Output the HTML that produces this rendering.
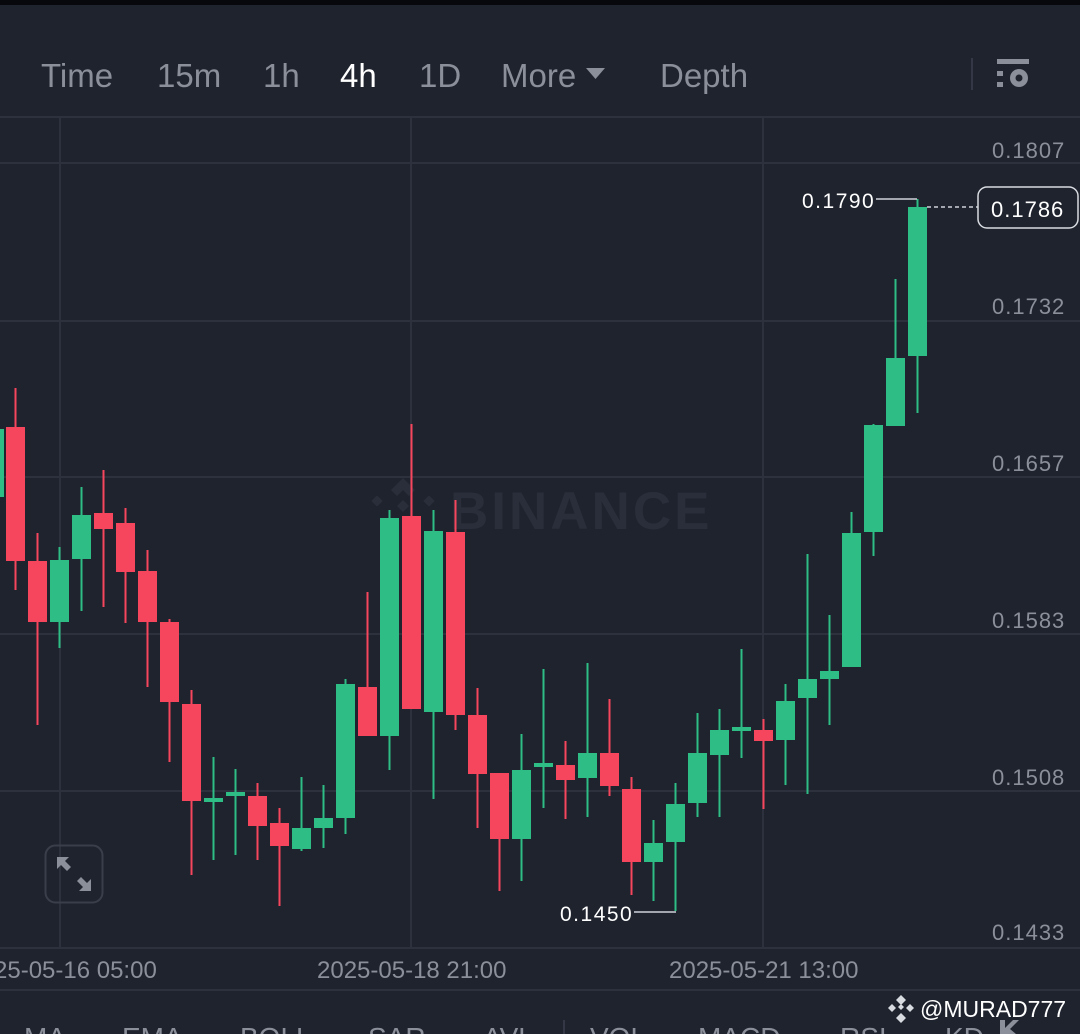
<!DOCTYPE html>
<html><head><meta charset="utf-8"><style>
html,body{margin:0;padding:0;background:#1f232e;width:1080px;height:1034px;overflow:hidden;font-family:"Liberation Sans",sans-serif}
</style></head><body>
<svg width="1080" height="1034" viewBox="0 0 1080 1034" xmlns="http://www.w3.org/2000/svg" style="position:absolute;left:0;top:0">
<rect x="0" y="0" width="1080" height="1034" fill="#1f232e"/>
<rect x="0" y="0" width="1080" height="5" fill="#06080c"/>
<g font-family="Liberation Sans, sans-serif" font-size="33" fill="#8b8f99">
<text x="41" y="87">Time</text>
<text x="157" y="87">15m</text>
<text x="263" y="87">1h</text>
<text x="340" y="87" fill="#ffffff">4h</text>
<text x="419" y="87">1D</text>
<text x="501" y="87">More</text>
<text x="660" y="87">Depth</text>
</g>
<path d="M586 68h19l-9.5 11z" fill="#8b8f99"/>
<rect x="971" y="58" width="2" height="32" fill="#343846"/>
<g fill="#8b8f99">
<rect x="997" y="59" width="32" height="5"/>
<rect x="997" y="71" width="6" height="5"/><rect x="997" y="82" width="6" height="5"/>
<circle cx="1019" cy="78" r="9"/>
</g>
<circle cx="1019" cy="78" r="3.5" fill="#1f232e"/>
<!-- grid -->
<g stroke="#2d313d" stroke-width="2">
<line x1="0" y1="117" x2="1080" y2="117"/>
<line x1="0" y1="163" x2="1080" y2="163"/>
<line x1="0" y1="321" x2="1080" y2="321"/>
<line x1="0" y1="477" x2="1080" y2="477"/>
<line x1="0" y1="634" x2="1080" y2="634"/>
<line x1="0" y1="791" x2="1080" y2="791"/>
<line x1="0" y1="948" x2="1080" y2="948"/>
<line x1="0" y1="990" x2="1080" y2="990"/>
<line x1="60" y1="117" x2="60" y2="948"/>
<line x1="411" y1="117" x2="411" y2="948"/>
<line x1="763" y1="117" x2="763" y2="948"/>
</g>
<g font-size="22" fill="#8b8f99" font-family="Liberation Sans, sans-serif" letter-spacing="1">
<text x="992" y="158">0.1807</text>
<text x="992" y="314">0.1732</text>
<text x="992" y="471">0.1657</text>
<text x="992" y="628">0.1583</text>
<text x="992" y="785">0.1508</text>
<text x="992" y="940">0.1433</text>
</g>
<g font-size="24" fill="#8b8f99" font-family="Liberation Sans, sans-serif">
<text x="-6" y="978">25-05-16 05:00</text>
<text x="317" y="978">2025-05-18 21:00</text>
<text x="669" y="978">2025-05-21 13:00</text>
</g>
<!-- watermark -->
<g fill="#2a2e3a">
<path d="M403 478l12 12-6 6-6-6-6 6-6-6z"/>
<rect x="373" y="497" width="8" height="8" transform="rotate(45 377 501)"/>
<rect x="425" y="497" width="8" height="8" transform="rotate(45 429 501)"/>
<path d="M403 500l6 6-6 6-6-6z"/>
</g>
<text x="450" y="529" font-size="53" font-weight="bold" fill="#2a2e3a" letter-spacing="3" font-family="Liberation Sans, sans-serif">BINANCE</text>
<!-- candles -->
<g fill="#f6465d">
<rect x="14.5" y="388" width="2" height="202"/><rect x="6" y="427" width="19" height="134"/>
<rect x="36.5" y="533" width="2" height="192"/><rect x="28" y="561" width="19" height="61"/>
<rect x="102.5" y="470" width="2" height="137"/><rect x="94" y="513" width="19" height="16"/>
<rect x="124.5" y="508" width="2" height="115"/><rect x="116" y="523" width="19" height="49"/>
<rect x="146.5" y="550" width="2" height="137"/><rect x="138" y="571" width="19" height="51"/>
<rect x="168.5" y="619" width="2" height="143"/><rect x="160" y="622" width="19" height="80"/>
<rect x="190.5" y="690" width="2" height="185"/><rect x="182" y="704" width="19" height="97"/>
<rect x="256.5" y="783" width="2" height="77"/><rect x="248" y="796" width="19" height="30"/>
<rect x="278.5" y="808" width="2" height="98"/><rect x="270" y="823" width="19" height="23"/>
<rect x="366.5" y="592" width="2" height="142"/><rect x="358" y="687" width="19" height="49"/>
<rect x="410.5" y="424" width="2" height="281"/><rect x="402" y="516" width="19" height="193"/>
<rect x="454.5" y="500" width="2" height="230"/><rect x="446" y="532" width="19" height="183"/>
<rect x="476.5" y="688" width="2" height="140"/><rect x="468" y="715" width="19" height="59"/>
<rect x="498.5" y="774" width="2" height="117"/><rect x="490" y="773" width="19" height="66"/>
<rect x="564.5" y="741" width="2" height="78"/><rect x="556" y="765" width="19" height="15"/>
<rect x="608.5" y="699" width="2" height="97"/><rect x="600" y="753" width="19" height="33"/>
<rect x="630.5" y="777" width="2" height="118"/><rect x="622" y="789" width="19" height="73"/>
<rect x="762.5" y="719" width="2" height="90"/><rect x="754" y="730" width="19" height="11"/>
</g>
<g fill="#2ebd85">
<rect x="0" y="429" width="4" height="68"/>
<rect x="58.5" y="547" width="2" height="101"/><rect x="50" y="560" width="19" height="62"/>
<rect x="80.5" y="487" width="2" height="124"/><rect x="72" y="515" width="19" height="44"/>
<rect x="212.5" y="757" width="2" height="103"/><rect x="204" y="798" width="19" height="4"/>
<rect x="234.5" y="769" width="2" height="86"/><rect x="226" y="792" width="19" height="4"/>
<rect x="300.5" y="777" width="2" height="74"/><rect x="292" y="828" width="19" height="21"/>
<rect x="322.5" y="785" width="2" height="63"/><rect x="314" y="818" width="19" height="10"/>
<rect x="344.5" y="679" width="2" height="155"/><rect x="336" y="684" width="19" height="134"/>
<rect x="388.5" y="510" width="2" height="260"/><rect x="380" y="518" width="19" height="218"/>
<rect x="432.5" y="510" width="2" height="289"/><rect x="424" y="531" width="19" height="181"/>
<rect x="520.5" y="734" width="2" height="147"/><rect x="512" y="770" width="19" height="69"/>
<rect x="542.5" y="669" width="2" height="139"/><rect x="534" y="763" width="19" height="4"/>
<rect x="586.5" y="663" width="2" height="154"/><rect x="578" y="753" width="19" height="25"/>
<rect x="652.5" y="820" width="2" height="81"/><rect x="644" y="843" width="19" height="19"/>
<rect x="674.5" y="783" width="2" height="128"/><rect x="666" y="804" width="19" height="38"/>
<rect x="696.5" y="713" width="2" height="104"/><rect x="688" y="753" width="19" height="50"/>
<rect x="718.5" y="709" width="2" height="108"/><rect x="710" y="730" width="19" height="25"/>
<rect x="740.5" y="649" width="2" height="109"/><rect x="732" y="727" width="19" height="4"/>
<rect x="784.5" y="684" width="2" height="101"/><rect x="776" y="701" width="19" height="39"/>
<rect x="806.5" y="554" width="2" height="240"/><rect x="798" y="679" width="19" height="19"/>
<rect x="828.5" y="615" width="2" height="110"/><rect x="820" y="671" width="19" height="8"/>
<rect x="850.5" y="512" width="2" height="44"/><rect x="842" y="533" width="19" height="134"/>
<rect x="872.5" y="424" width="2" height="132"/><rect x="864" y="425" width="19" height="107"/>
<rect x="894.5" y="279" width="2" height="147"/><rect x="886" y="358" width="19" height="68"/>
<rect x="916.5" y="199" width="2" height="214"/><rect x="908" y="207" width="19" height="149"/>
</g>
<!-- annotations -->
<line x1="876" y1="199" x2="917" y2="199" stroke="#cfd2d8" stroke-width="1.5"/>
<text x="802" y="208" font-size="21" fill="#ffffff" letter-spacing="1.5" font-family="Liberation Sans, sans-serif">0.1790</text>
<line x1="927" y1="207" x2="978" y2="207" stroke="#cfd2d8" stroke-width="1.5" stroke-dasharray="4 3"/>
<rect x="978" y="187" width="100" height="41" rx="9" fill="#1f232e" stroke="#d8dbe0" stroke-width="1.5"/>
<text x="991" y="217" font-size="22" fill="#ffffff" letter-spacing="1" font-family="Liberation Sans, sans-serif">0.1786</text>
<line x1="634" y1="912" x2="676" y2="912" stroke="#cfd2d8" stroke-width="1.5"/>
<text x="560" y="921" font-size="21" fill="#ffffff" letter-spacing="1.5" font-family="Liberation Sans, sans-serif">0.1450</text>
<!-- fullscreen button -->
<rect x="45.5" y="845.5" width="57" height="57" rx="10" fill="none" stroke="#3a3e4a" stroke-width="2"/>
<g fill="#8b8f99">
<path d="M57 857h12l-4 4 6 6-4 4-6-6-4 4z"/>
<path d="M91 891h-12l4-4-6-6 4-4 6 6 4-4z"/>
</g>
<!-- bottom -->
<g fill="#d8dbe0">
<path d="M901 995l5 5-5 5-5-5z"/><path d="M892 1004l4 4-4 4-4-4z"/><path d="M910 1004l4 4-4 4-4-4z"/>
<path d="M901 1013l5 5-5 5-5-5z"/><path d="M901 1004l3 3-3 3-3-3z"/>
</g>
<text x="920" y="1017" font-size="23" fill="#ffffff" font-family="Liberation Sans, sans-serif">@MURAD777</text>
<g font-size="28" fill="#8b8f99" font-family="Liberation Sans, sans-serif">
<text x="24" y="1047">MA</text><text x="122" y="1047">EMA</text><text x="240" y="1047">BOLL</text>
<text x="368" y="1047">SAR</text><text x="483" y="1047">AVL</text>
<text x="590" y="1047">VOL</text><text x="698" y="1047">MACD</text><text x="840" y="1047">RSI</text><text x="945" y="1047">KD</text>
</g>
<rect x="563" y="1020" width="2" height="14" fill="#343846"/>
<path d="M1000 1034v-14h5v8l8-8h6l-9 9 6 5z" fill="#8b8f99"/>
</svg>
</body></html>
